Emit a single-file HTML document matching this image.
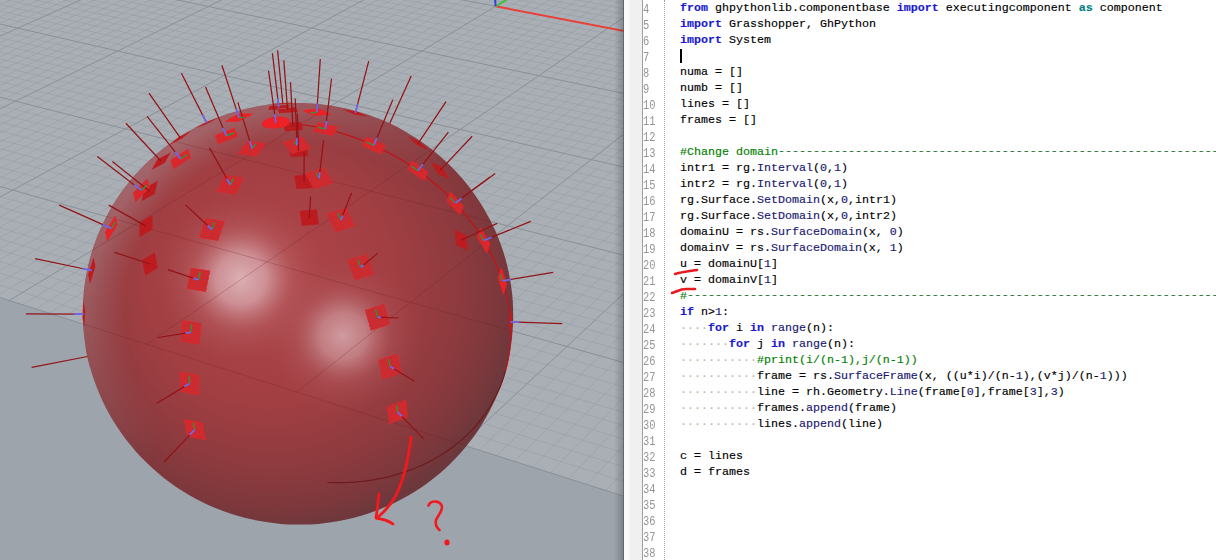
<!DOCTYPE html>
<html><head><meta charset="utf-8"><style>
html,body{margin:0;padding:0;width:1216px;height:560px;overflow:hidden;background:#fff}
#vp{position:absolute;left:0;top:0;width:624px;height:560px;overflow:hidden}
#strip{position:absolute;left:624px;top:0;width:18px;height:560px;background:linear-gradient(90deg,#fafafa 0,#fafafa 5px,#f0f0f0 6px)}
#gl{position:absolute;left:642px;top:0;width:1px;height:560px;background:#a0a0a0}
#ed{position:absolute;left:643px;top:0;width:573px;height:560px;background:#fff;overflow:hidden}
#sep{position:absolute;left:664px;top:0;width:0;height:560px;border-left:1px dotted #a0a0a0}
.l,.n{position:absolute;font-family:"Liberation Mono",monospace;font-size:11.67px;line-height:16px;white-space:pre;height:16px}
.l{left:680px;color:#000;-webkit-text-stroke:0.15px currentColor}
.n{left:643px;color:#959595;font-size:12.4px;transform:scaleX(0.84);transform-origin:0 0}
.d{color:#c0b8a8}
#cur{position:absolute;left:680px;top:49px;width:2px;height:14px;background:#000}
</style></head><body>
<div id="vp"><svg width="624" height="560" viewBox="0 0 624 560" style="position:absolute;left:0;top:0"><defs><clipPath id="sc"><path d="M511.3 287.3 L512.2 294.4 L512.8 301.6 L513.1 308.7 L513.2 315.9 L513.1 323.1 L512.6 330.3 L512 337.4 L511.1 344.5 L510 351.6 L508.6 358.6 L506.9 365.6 L505.1 372.6 L502.9 379.4 L500.6 386.2 L498 392.9 L495.2 399.5 L492.1 406 L488.8 412.4 L485.3 418.7 L481.6 424.9 L477.7 431 L473.5 436.9 L469.2 442.6 L464.6 448.3 L459.9 453.7 L454.9 459.1 L449.8 464.2 L444.5 469.2 L439 474 L433.4 478.6 L427.6 483 L421.6 487.2 L415.5 491.2 L409.2 495 L402.8 498.6 L396.3 502 L389.6 505.2 L382.9 508.1 L376 510.8 L369 513.3 L362 515.5 L354.9 517.5 L347.6 519.3 L340.4 520.8 L333 522.1 L325.7 523.1 L318.2 523.9 L310.8 524.4 L303.3 524.6 L295.8 524.6 L288.3 524.4 L280.9 523.9 L273.4 523.1 L265.9 522.1 L258.5 520.8 L251.2 519.3 L243.8 517.5 L236.6 515.5 L229.4 513.2 L222.3 510.7 L215.2 507.9 L208.3 504.9 L201.5 501.7 L194.8 498.2 L188.2 494.5 L181.7 490.5 L175.4 486.4 L169.2 482 L163.2 477.4 L157.4 472.6 L151.7 467.5 L146.2 462.3 L140.9 456.9 L135.8 451.4 L130.9 445.6 L126.1 439.7 L121.6 433.6 L117.4 427.3 L113.3 420.9 L109.5 414.4 L105.9 407.7 L102.6 400.9 L99.5 394 L96.7 387 L94.1 379.9 L91.7 372.7 L89.7 365.5 L87.9 358.1 L86.3 350.7 L85.1 343.3 L84.1 335.8 L83.4 328.3 L82.9 320.8 L82.8 313.2 L82.9 305.7 L83.3 298.1 L83.9 290.6 L84.9 283.1 L86.1 275.7 L87.6 268.3 L89.3 260.9 L91.3 253.7 L93.6 246.5 L96.1 239.4 L98.9 232.4 L102 225.5 L105.3 218.7 L108.8 212 L112.6 205.5 L116.7 199.1 L120.9 192.8 L125.4 186.7 L130.1 180.8 L135 175.1 L140.1 169.5 L145.4 164.1 L150.9 158.9 L156.6 153.9 L162.5 149.1 L168.5 144.5 L174.7 140.2 L181 136 L187.5 132.1 L194.1 128.4 L200.9 125 L207.7 121.8 L214.7 118.8 L221.8 116.1 L228.9 113.6 L236.2 111.4 L243.5 109.4 L250.9 107.7 L258.3 106.3 L265.7 105.1 L273.2 104.1 L280.8 103.5 L288.3 103.1 L295.8 102.9 L303.4 103 L310.9 103.4 L318.4 104 L325.9 104.9 L333.3 106 L340.7 107.4 L348 109 L355.3 110.9 L362.5 113 L369.6 115.3 L376.6 117.9 L383.5 120.8 L390.3 123.8 L397 127.1 L403.5 130.6 L409.9 134.4 L416.2 138.3 L422.4 142.4 L428.3 146.8 L434.2 151.3 L439.8 156.1 L445.3 161 L450.6 166.1 L455.8 171.3 L460.7 176.7 L465.4 182.3 L470 188.1 L474.3 193.9 L478.4 200 L482.3 206.1 L486 212.4 L489.5 218.8 L492.7 225.3 L495.8 231.8 L498.5 238.5 L501.1 245.3 L503.4 252.1 L505.5 259.1 L507.3 266 L508.9 273.1 L510.2 280.1Z"/></clipPath><radialGradient id="sb" gradientUnits="userSpaceOnUse" cx="275" cy="285" r="245" fx="265" fy="275">
<stop offset="0" stop-color="rgb(176,70,74)"/><stop offset="0.5" stop-color="rgb(162,63,67)"/><stop offset="0.78" stop-color="rgb(140,58,62)"/><stop offset="0.92" stop-color="rgb(124,56,60)"/><stop offset="1" stop-color="rgb(108,56,60)"/></radialGradient><radialGradient id="h1" gradientUnits="userSpaceOnUse" cx="241" cy="279" r="85">
<stop offset="0" stop-color="rgb(222,182,186)" stop-opacity="0.95"/><stop offset="0.3" stop-color="rgb(212,160,165)" stop-opacity="0.82"/><stop offset="0.62" stop-color="rgb(190,112,117)" stop-opacity="0.3"/><stop offset="1" stop-color="rgb(170,80,85)" stop-opacity="0"/></radialGradient><radialGradient id="h2" gradientUnits="userSpaceOnUse" cx="343" cy="336" r="78">
<stop offset="0" stop-color="rgb(212,165,170)" stop-opacity="0.9"/><stop offset="0.3" stop-color="rgb(204,148,152)" stop-opacity="0.72"/><stop offset="0.62" stop-color="rgb(182,104,109)" stop-opacity="0.26"/><stop offset="1" stop-color="rgb(170,80,85)" stop-opacity="0"/></radialGradient><radialGradient id="rimg" cx="0.5" cy="0.5" r="0.5"><stop offset="0.8" stop-color="#000"/><stop offset="0.97" stop-color="#fff"/><stop offset="1" stop-color="#fff"/></radialGradient><mask id="rim"><path d="M511.3 287.3 L512.2 294.4 L512.8 301.6 L513.1 308.7 L513.2 315.9 L513.1 323.1 L512.6 330.3 L512 337.4 L511.1 344.5 L510 351.6 L508.6 358.6 L506.9 365.6 L505.1 372.6 L502.9 379.4 L500.6 386.2 L498 392.9 L495.2 399.5 L492.1 406 L488.8 412.4 L485.3 418.7 L481.6 424.9 L477.7 431 L473.5 436.9 L469.2 442.6 L464.6 448.3 L459.9 453.7 L454.9 459.1 L449.8 464.2 L444.5 469.2 L439 474 L433.4 478.6 L427.6 483 L421.6 487.2 L415.5 491.2 L409.2 495 L402.8 498.6 L396.3 502 L389.6 505.2 L382.9 508.1 L376 510.8 L369 513.3 L362 515.5 L354.9 517.5 L347.6 519.3 L340.4 520.8 L333 522.1 L325.7 523.1 L318.2 523.9 L310.8 524.4 L303.3 524.6 L295.8 524.6 L288.3 524.4 L280.9 523.9 L273.4 523.1 L265.9 522.1 L258.5 520.8 L251.2 519.3 L243.8 517.5 L236.6 515.5 L229.4 513.2 L222.3 510.7 L215.2 507.9 L208.3 504.9 L201.5 501.7 L194.8 498.2 L188.2 494.5 L181.7 490.5 L175.4 486.4 L169.2 482 L163.2 477.4 L157.4 472.6 L151.7 467.5 L146.2 462.3 L140.9 456.9 L135.8 451.4 L130.9 445.6 L126.1 439.7 L121.6 433.6 L117.4 427.3 L113.3 420.9 L109.5 414.4 L105.9 407.7 L102.6 400.9 L99.5 394 L96.7 387 L94.1 379.9 L91.7 372.7 L89.7 365.5 L87.9 358.1 L86.3 350.7 L85.1 343.3 L84.1 335.8 L83.4 328.3 L82.9 320.8 L82.8 313.2 L82.9 305.7 L83.3 298.1 L83.9 290.6 L84.9 283.1 L86.1 275.7 L87.6 268.3 L89.3 260.9 L91.3 253.7 L93.6 246.5 L96.1 239.4 L98.9 232.4 L102 225.5 L105.3 218.7 L108.8 212 L112.6 205.5 L116.7 199.1 L120.9 192.8 L125.4 186.7 L130.1 180.8 L135 175.1 L140.1 169.5 L145.4 164.1 L150.9 158.9 L156.6 153.9 L162.5 149.1 L168.5 144.5 L174.7 140.2 L181 136 L187.5 132.1 L194.1 128.4 L200.9 125 L207.7 121.8 L214.7 118.8 L221.8 116.1 L228.9 113.6 L236.2 111.4 L243.5 109.4 L250.9 107.7 L258.3 106.3 L265.7 105.1 L273.2 104.1 L280.8 103.5 L288.3 103.1 L295.8 102.9 L303.4 103 L310.9 103.4 L318.4 104 L325.9 104.9 L333.3 106 L340.7 107.4 L348 109 L355.3 110.9 L362.5 113 L369.6 115.3 L376.6 117.9 L383.5 120.8 L390.3 123.8 L397 127.1 L403.5 130.6 L409.9 134.4 L416.2 138.3 L422.4 142.4 L428.3 146.8 L434.2 151.3 L439.8 156.1 L445.3 161 L450.6 166.1 L455.8 171.3 L460.7 176.7 L465.4 182.3 L470 188.1 L474.3 193.9 L478.4 200 L482.3 206.1 L486 212.4 L489.5 218.8 L492.7 225.3 L495.8 231.8 L498.5 238.5 L501.1 245.3 L503.4 252.1 L505.5 259.1 L507.3 266 L508.9 273.1 L510.2 280.1Z" fill="url(#rimg)"/></mask><linearGradient id="rimc" gradientUnits="userSpaceOnUse" x1="120" y1="130" x2="300" y2="320"><stop offset="0" stop-color="rgb(190,170,176)" stop-opacity="0.45"/><stop offset="1" stop-color="rgb(190,170,176)" stop-opacity="0"/></linearGradient><linearGradient id="shd" x1="0" x2="1"><stop offset="0" stop-color="#000" stop-opacity="0"/><stop offset="1" stop-color="#000" stop-opacity="0.22"/></linearGradient></defs><rect width="624" height="560" fill="#9ea4ab"/><polygon points="-532.4,128 845.4,566.8 1290.2,-87.7 357.9,-214.2" fill="#a9afb5"/><path d="M-523.4 130.8L365.2 -213.3M-517.8 122.4L854.2 553.8M-514.4 133.7L372.6 -212.3M-503.4 116.9L862.9 541.2M-505.3 136.6L380 -211.2M-489.2 111.4L871.3 528.7M-496.2 139.5L387.4 -210.2M-475.2 106L879.6 516.5M-486.9 142.5L394.9 -209.2M-461.4 100.7L887.7 504.5M-477.7 145.4L402.4 -208.2M-447.7 95.5L895.7 492.8M-468.3 148.4L409.9 -207.2M-434.2 90.3L903.6 481.3M-458.9 151.4L417.5 -206.2M-420.9 85.1L911.2 469.9M-449.4 154.4L425.1 -205.1M-407.7 80.1L918.8 458.8M-430.2 160.5L440.4 -203M-381.9 70.1L933.5 437.2M-420.5 163.6L448.1 -202M-369.2 65.3L940.6 426.7M-410.8 166.7L455.8 -201M-356.6 60.4L947.7 416.4M-400.9 169.8L463.6 -199.9M-344.2 55.7L954.6 406.2M-391 173L471.4 -198.8M-332 51L961.3 396.2M-381 176.2L479.3 -197.8M-319.9 46.3L968 386.4M-371 179.4L487.1 -196.7M-307.9 41.7L974.5 376.8M-360.8 182.6L495 -195.6M-296.1 37.2L981 367.3M-350.6 185.9L503 -194.6M-284.4 32.7L987.3 358M-330 192.4L519 -192.4M-261.4 23.8L999.7 339.8M-319.5 195.8L527 -191.3M-250.1 19.5L1005.7 331M-309 199.1L535.1 -190.2M-239 15.2L1011.6 322.2M-298.4 202.5L543.3 -189.1M-227.9 10.9L1017.4 313.7M-287.7 205.9L551.4 -188M-217 6.7L1023.2 305.2M-276.9 209.3L559.6 -186.9M-206.2 2.6L1028.8 296.9M-266.1 212.8L567.8 -185.8M-195.5 -1.5L1034.4 288.7M-255.1 216.3L576.1 -184.6M-184.9 -5.6L1039.9 280.7M-244.1 219.8L584.4 -183.5M-174.5 -9.6L1045.2 272.8M-221.8 226.9L601.2 -181.2M-153.9 -17.5L1055.8 257.3M-210.5 230.5L609.6 -180.1M-143.8 -21.4L1060.9 249.7M-199.1 234.1L618.1 -178.9M-133.8 -25.2L1066 242.2M-187.6 237.8L626.6 -177.8M-123.9 -29L1071 234.9M-176.1 241.5L635.1 -176.6M-114.1 -32.8L1075.9 227.7M-164.4 245.2L643.7 -175.5M-104.4 -36.5L1080.7 220.5M-152.7 248.9L652.3 -174.3M-94.8 -40.2L1085.5 213.5M-140.8 252.7L661 -173.1M-85.3 -43.9L1090.2 206.6M-128.9 256.5L669.7 -171.9M-75.9 -47.5L1094.9 199.7M-104.7 264.2L687.2 -169.6M-57.4 -54.6L1103.9 186.4M-92.4 268.1L696 -168.4M-48.3 -58.1L1108.4 179.8M-80.1 272L704.9 -167.2M-39.3 -61.6L1112.8 173.4M-67.7 276L713.8 -165.9M-30.3 -65L1117.1 167M-55.1 280L722.8 -164.7M-21.5 -68.4L1121.3 160.8M-42.4 284L731.8 -163.5M-12.8 -71.8L1125.5 154.6M-29.7 288.1L740.8 -162.3M-4.1 -75.1L1129.7 148.5M-16.8 292.2L749.9 -161.1M4.5 -78.4L1133.8 142.5M-3.8 296.3L759 -159.8M13 -81.7L1137.8 136.5M22.5 304.7L777.4 -157.3M29.7 -88.1L1145.7 124.9M35.8 308.9L786.6 -156.1M38 -91.3L1149.6 119.2M49.2 313.2L795.9 -154.8M46.2 -94.4L1153.4 113.5M62.8 317.5L805.3 -153.5M54.2 -97.5L1157.2 108M76.4 321.9L814.7 -152.3M62.3 -100.6L1160.9 102.5M90.2 326.3L824.1 -151M70.2 -103.7L1164.6 97.1M104.1 330.7L833.6 -149.7M78.1 -106.7L1168.3 91.7M118.2 335.2L843.1 -148.4M85.9 -109.7L1171.8 86.4M132.3 339.7L852.7 -147.1M93.6 -112.6L1175.4 81.2M161 348.8L872 -144.5M108.8 -118.5L1182.3 71M175.6 353.4L881.7 -143.2M116.3 -121.4L1185.8 66M190.2 358.1L891.5 -141.8M123.7 -124.2L1189.1 61M205.1 362.8L901.3 -140.5M131.1 -127.1L1192.5 56.1M220 367.6L911.1 -139.2M138.4 -129.9L1195.7 51.3M235.1 372.4L921.1 -137.8M145.6 -132.7L1199 46.5M250.3 377.2L931 -136.5M152.8 -135.4L1202.2 41.8M265.7 382.1L941 -135.1M159.9 -138.2L1205.4 37.1M281.2 387.1L951.1 -133.7M167 -140.9L1208.5 32.5M312.6 397.1L971.4 -131M180.9 -146.2L1214.7 23.4M328.6 402.2L981.6 -129.6M187.7 -148.8L1217.7 19M344.7 407.3L991.9 -128.2M194.5 -151.5L1220.7 14.6M360.9 412.5L1002.2 -126.8M201.2 -154L1223.7 10.2M377.3 417.7L1012.5 -125.4M207.9 -156.6L1226.6 5.9M393.9 423L1023 -124M214.5 -159.2L1229.5 1.6M410.6 428.3L1033.4 -122.6M221.1 -161.7L1232.3 -2.6M427.5 433.7L1044 -121.1M227.6 -164.2L1235.2 -6.7M444.5 439.1L1054.6 -119.7M234.1 -166.7L1238 -10.8M479.1 450.1L1075.9 -116.8M246.8 -171.6L1243.5 -18.9M496.7 455.7L1086.7 -115.3M253.1 -174L1246.2 -22.9M514.4 461.4L1097.5 -113.9M259.3 -176.4L1248.8 -26.8M532.3 467.1L1108.3 -112.4M265.5 -178.7L1251.5 -30.7M550.4 472.8L1119.3 -110.9M271.7 -181.1L1254.1 -34.6M568.7 478.7L1130.2 -109.4M277.7 -183.4L1256.7 -38.4M587.2 484.5L1141.3 -107.9M283.8 -185.8L1259.2 -42.2M605.8 490.5L1152.4 -106.4M289.7 -188.1L1261.8 -45.9M624.7 496.5L1163.5 -104.9M295.7 -190.3L1264.3 -49.6M662.9 508.7L1186 -101.9M307.4 -194.8L1269.2 -56.8M682.4 514.9L1197.3 -100.3M313.2 -197.1L1271.6 -60.4M702 521.1L1208.7 -98.8M318.9 -199.3L1274 -64M721.8 527.4L1220.2 -97.2M324.6 -201.5L1276.4 -67.5M741.9 533.8L1231.7 -95.7M330.3 -203.6L1278.8 -70.9M762.2 540.3L1243.3 -94.1M335.9 -205.8L1281.1 -74.3M782.6 546.8L1254.9 -92.5M341.4 -207.9L1283.4 -77.7M803.4 553.4L1266.6 -90.9M347 -210.1L1285.7 -81.1M824.3 560.1L1278.4 -89.3M352.4 -212.2L1288 -84.4" stroke="#949aa2" stroke-width="0.5" fill="none"/><path d="M-532.4 128L357.9 -214.2M-532.4 128L845.4 566.8M-439.9 157.4L432.7 -204.1M-394.7 75.1L926.2 447.9M-340.3 189.1L511 -193.5M-272.8 28.2L993.5 348.8M-233 223.3L592.8 -182.4M-164.2 -13.6L1050.6 264.9M-116.8 260.3L678.4 -170.7M-66.6 -51.1L1099.4 193M9.3 300.5L495.6 6.3M21.4 -84.9L495.6 6.3M146.6 344.2L862.3 -145.8M101.2 -115.6L1178.9 76.1M296.8 392.1L961.2 -132.4M173.9 -143.5L1211.6 27.9M461.7 444.6L1065.2 -118.3M240.5 -169.1L1240.7 -14.9M643.7 502.5L1174.7 -103.4M301.6 -192.6L1266.8 -53.2M845.4 566.8L1290.2 -87.7M357.9 -214.2L1290.2 -87.7" stroke="#899097" stroke-width="1" fill="none"/><path d="M495.6 6.3L1141.8 130.7" stroke="#e8403a" stroke-width="2" fill="none"/><path d="M495.6 6.3L768.2 -158.6" stroke="#40c040" stroke-width="2" fill="none"/><path d="M495.6 6.3L491.5 -56.8" stroke="#3040e0" stroke-width="2" fill="none"/><path d="M511.3 287.3 L512.2 294.4 L512.8 301.6 L513.1 308.7 L513.2 315.9 L513.1 323.1 L512.6 330.3 L512 337.4 L511.1 344.5 L510 351.6 L508.6 358.6 L506.9 365.6 L505.1 372.6 L502.9 379.4 L500.6 386.2 L498 392.9 L495.2 399.5 L492.1 406 L488.8 412.4 L485.3 418.7 L481.6 424.9 L477.7 431 L473.5 436.9 L469.2 442.6 L464.6 448.3 L459.9 453.7 L454.9 459.1 L449.8 464.2 L444.5 469.2 L439 474 L433.4 478.6 L427.6 483 L421.6 487.2 L415.5 491.2 L409.2 495 L402.8 498.6 L396.3 502 L389.6 505.2 L382.9 508.1 L376 510.8 L369 513.3 L362 515.5 L354.9 517.5 L347.6 519.3 L340.4 520.8 L333 522.1 L325.7 523.1 L318.2 523.9 L310.8 524.4 L303.3 524.6 L295.8 524.6 L288.3 524.4 L280.9 523.9 L273.4 523.1 L265.9 522.1 L258.5 520.8 L251.2 519.3 L243.8 517.5 L236.6 515.5 L229.4 513.2 L222.3 510.7 L215.2 507.9 L208.3 504.9 L201.5 501.7 L194.8 498.2 L188.2 494.5 L181.7 490.5 L175.4 486.4 L169.2 482 L163.2 477.4 L157.4 472.6 L151.7 467.5 L146.2 462.3 L140.9 456.9 L135.8 451.4 L130.9 445.6 L126.1 439.7 L121.6 433.6 L117.4 427.3 L113.3 420.9 L109.5 414.4 L105.9 407.7 L102.6 400.9 L99.5 394 L96.7 387 L94.1 379.9 L91.7 372.7 L89.7 365.5 L87.9 358.1 L86.3 350.7 L85.1 343.3 L84.1 335.8 L83.4 328.3 L82.9 320.8 L82.8 313.2 L82.9 305.7 L83.3 298.1 L83.9 290.6 L84.9 283.1 L86.1 275.7 L87.6 268.3 L89.3 260.9 L91.3 253.7 L93.6 246.5 L96.1 239.4 L98.9 232.4 L102 225.5 L105.3 218.7 L108.8 212 L112.6 205.5 L116.7 199.1 L120.9 192.8 L125.4 186.7 L130.1 180.8 L135 175.1 L140.1 169.5 L145.4 164.1 L150.9 158.9 L156.6 153.9 L162.5 149.1 L168.5 144.5 L174.7 140.2 L181 136 L187.5 132.1 L194.1 128.4 L200.9 125 L207.7 121.8 L214.7 118.8 L221.8 116.1 L228.9 113.6 L236.2 111.4 L243.5 109.4 L250.9 107.7 L258.3 106.3 L265.7 105.1 L273.2 104.1 L280.8 103.5 L288.3 103.1 L295.8 102.9 L303.4 103 L310.9 103.4 L318.4 104 L325.9 104.9 L333.3 106 L340.7 107.4 L348 109 L355.3 110.9 L362.5 113 L369.6 115.3 L376.6 117.9 L383.5 120.8 L390.3 123.8 L397 127.1 L403.5 130.6 L409.9 134.4 L416.2 138.3 L422.4 142.4 L428.3 146.8 L434.2 151.3 L439.8 156.1 L445.3 161 L450.6 166.1 L455.8 171.3 L460.7 176.7 L465.4 182.3 L470 188.1 L474.3 193.9 L478.4 200 L482.3 206.1 L486 212.4 L489.5 218.8 L492.7 225.3 L495.8 231.8 L498.5 238.5 L501.1 245.3 L503.4 252.1 L505.5 259.1 L507.3 266 L508.9 273.1 L510.2 280.1Z" fill="url(#sb)"/><g clip-path="url(#sc)"><rect x="80" y="100" width="440" height="430" fill="url(#h1)"/><rect x="80" y="100" width="440" height="430" fill="url(#h2)"/><rect x="80" y="100" width="440" height="430" fill="url(#rimc)" mask="url(#rim)"/><path d="M-532.4 128L357.9 -214.2M-532.4 128L845.4 566.8M-439.9 157.4L432.7 -204.1M-394.7 75.1L926.2 447.9M-340.3 189.1L511 -193.5M-272.8 28.2L993.5 348.8M-233 223.3L592.8 -182.4M-164.2 -13.6L1050.6 264.9M-116.8 260.3L678.4 -170.7M-66.6 -51.1L1099.4 193M9.3 300.5L495.6 6.3M21.4 -84.9L495.6 6.3M146.6 344.2L862.3 -145.8M101.2 -115.6L1178.9 76.1M296.8 392.1L961.2 -132.4M173.9 -143.5L1211.6 27.9M461.7 444.6L1065.2 -118.3M240.5 -169.1L1240.7 -14.9M643.7 502.5L1174.7 -103.4M301.6 -192.6L1266.8 -53.2M845.4 566.8L1290.2 -87.7M357.9 -214.2L1290.2 -87.7" stroke="#6a2024" stroke-opacity="0.25" stroke-width="1" fill="none"/></g><path d="M327.4 482.5 L334.1 482.7 L340.8 482.7 L347.4 482.5 L354 482.1 L360.5 481.5 L367 480.8 L373.4 479.8 L379.8 478.6 L386.1 477.3 L392.3 475.8 L398.4 474 L404.4 472.1 L410.3 470 L416.1 467.8 L421.8 465.3 L427.3 462.7 L432.8 459.8 L438.1 456.8 L443.2 453.7 L448.3 450.3 L453.1 446.8 L457.8 443.1 L462.4 439.3 L466.7 435.2 L470.9 431.1 L474.9 426.8 L478.8 422.3 L482.4 417.7 L485.8 412.9 L489.1 408 L492.1 403 L494.9 397.8 L497.5 392.6 L499.9 387.2 L502.1 381.7 L504 376.1 L505.7 370.3" stroke="#6e1a1e" stroke-width="1.2" fill="none"/><path d="M505.7 370.3 L507.1 364.5 L508.3 358.7 L509.3 352.7 L510 346.6 L510.5 340.5 L510.7 334.3 L510.7 328.1 L510.4 321.8 L509.9 315.5 L509.1 309.2 L508 302.8 L506.7 296.4 L505.1 290 L503.3 283.6 L501.2 277.3 L498.8 270.9 L496.2 264.6 L493.4 258.3 L490.2 252 L486.9 245.8 L483.3 239.7 L479.4 233.6 L475.3 227.6 L471 221.7 L466.4 215.9 L461.7 210.2 L456.7 204.6 L451.4 199.1 L446 193.8 L440.4 188.6 L434.6 183.5 L428.6 178.6 L422.4 173.9 L416 169.3 L409.5 164.9 L402.8 160.7 L396 156.7 L389.1 152.9 L382 149.3 L374.8 145.9 L367.5 142.7 L360.1 139.7 L352.7 136.9 L345.1 134.4 L337.5 132.1 L329.9 130.1 L322.2 128.3 L314.5 126.7 L306.7 125.4 L299 124.3 L291.3 123.5 L283.6 122.9 L275.9 122.6" stroke="#c01418" stroke-width="1.3" fill="none"/><path d="M509.5 334.7 L512.4 325 L511.3 309 L508.4 318.7ZM467.6 250.6 L456.2 245 L455 229.8 L466.4 235.4ZM462.3 213 L450.7 207.5 L446.5 193.6 L458.1 199ZM449.4 179 L437.7 173.7 L430.5 161.7 L442.2 167ZM429.1 150.6 L417.3 145.3 L407.3 135.9 L419.1 141.2ZM401.9 129.3 L390 124 L377.4 117.9 L389.3 123.2ZM368.6 116.7 L356.7 111.4 L342.1 109 L354.1 114.4ZM318.9 224.5 L301.8 225.8 L299.8 210.8 L316.9 209.6ZM313.7 187.9 L296.5 189.1 L294.2 175.8 L311.6 174.6ZM308.4 155.9 L290.8 157.1 L288.5 146.1 L306.3 144.8ZM303 130.1 L285 131.3 L282.7 123.1 L301 121.9ZM297.9 112 L279.3 113.2 L277.2 108.6 L296 107.3ZM293.2 103.2 L274.1 104.5 L272.3 103.8 L291.5 102.5ZM289.3 104.8 L269.7 106.2 L268.2 109.9 L288 108.6ZM157.8 267.9 L145.2 275.5 L142.1 260.1 L154.9 252.5ZM152.5 229.6 L139.6 237 L139.4 222.5 L152.4 215.1ZM154.7 194 L141.6 201.3 L144.5 188.3 L157.7 181.1ZM164.7 163 L151.4 170.1 L157.4 159.5 L170.8 152.3ZM182.4 138.2 L169 145.3 L178.1 137.6 L191.5 130.5ZM207.4 121.4 L194 128.6 L205.7 124.5 L219.2 117.3ZM88.5 359.8 L90.3 369.4 L86.6 353.1 L84.8 343.6ZM82.5 317.9 L84.3 327.4 L85.2 310.1 L83.3 300.8ZM88.1 274.5 L90 283.7 L95.5 266.5 L93.6 257.4Z" fill="#bc1c20"/><path d="M187.4 436.3 L205.5 439.7 L202.3 422.8 L184.1 419.4ZM180.9 391.5 L199.2 394.8 L198.5 375.3 L180 372ZM180.7 341.1 L199.2 344.3 L201 323.5 L182.4 320.4ZM187 288.6 L205.6 291.6 L209.8 271 L191.2 268ZM199.4 237.6 L218 240.4 L224.4 221.4 L205.8 218.6ZM217 191.6 L235.4 194.2 L243.5 178 L225.1 175.4ZM238.4 153.5 L256.6 156 L265.7 143.6 L247.6 141.1ZM262.1 125.4 L280 127.8 L289.5 119.7 L271.8 117.4ZM389.3 423.6 L407.5 417 L405.7 400.2 L387.3 406.7ZM382.7 379.2 L401.3 372.8 L397.4 353.9 L378.7 360.2ZM371.1 330.3 L390 324.1 L384.2 304.2 L365.3 310.3ZM355.1 279.9 L374 274 L366.7 254.5 L347.7 260.4ZM335.6 231.6 L354.6 225.9 L346.2 208.2 L327.2 213.8ZM314 188.6 L333 183.2 L324.2 168.4 L305.2 173.6ZM291.8 153.5 L310.7 148.4 L302 137.4 L283.2 142.4ZM270.5 128.5 L289.2 123.6 L281.2 116.8 L262.6 121.6ZM503.6 293.8 L506.5 284.2 L501.3 268 L498.2 277.5ZM486.9 253 L490.1 243.7 L480.7 228.1 L477.4 237.4ZM460 214.5 L463.5 205.5 L450.4 191.5 L446.8 200.5ZM424 180.8 L427.9 172 L411.7 160.5 L407.7 169.2ZM380.9 153.9 L385.2 145.2 L366.8 137 L362.3 145.5ZM332.9 135.6 L337.7 127.1 L318.2 122.5 L313.2 131ZM283 127.1 L288.3 118.7 L268.8 118.2 L263.4 126.5ZM330.7 114.1 L318.7 108.7 L302.9 110.5 L314.8 116ZM290 122.3 L278.1 116.7 L261.7 122.9 L273.6 128.6ZM286.4 117.8 L266.3 119.1 L265.3 127.4 L285.6 126.1ZM238.8 114 L225.3 121.2 L239.2 121.1 L252.6 113.9ZM274.9 116.9 L261.6 124.2 L276.9 128.3 L290.1 121ZM105.3 232 L107.4 240.9 L117.3 224.8 L115.2 216.1ZM133.4 193.1 L135.7 201.7 L149.7 187.7 L147.2 179.2ZM170.8 160.2 L173.5 168.5 L190.6 157.5 L187.8 149.4ZM215.3 135.5 L218.5 143.5 L237.6 136.2 L234.3 128.2ZM264.1 120.3 L267.7 128.1 L287.7 124.9 L284 117.1Z" fill="#a8363a"/><path d="M187.4 436.3L184.1 419.4M187.4 436.3L205.5 439.7M189.2 436.6L185.9 419.7M187 434.6L205.2 438M191 436.9L187.7 420.1M186.7 432.9L204.9 436.3M192.8 437.3L189.5 420.4M186.4 431.2L204.5 434.6M194.6 437.6L191.3 420.7M186.1 429.5L204.2 433M196.4 438L193.2 421.1M185.7 427.8L203.9 431.3M198.2 438.3L195 421.4M185.4 426.2L203.6 429.6M200 438.7L196.8 421.8M185.1 424.5L203.3 427.9M201.9 439L198.7 422.1M184.7 422.8L203 426.2M203.7 439.4L200.5 422.4M184.4 421.1L202.6 424.5M205.5 439.7L202.3 422.8M184.1 419.4L202.3 422.8M180.9 391.5L180 372M180.9 391.5L199.2 394.8M182.7 391.8L181.8 372.3M180.8 389.5L199.2 392.9M184.5 392.1L183.7 372.7M180.7 387.6L199.1 390.9M186.4 392.5L185.5 373M180.6 385.6L199 389M188.2 392.8L187.4 373.3M180.5 383.7L198.9 387M190 393.1L189.2 373.7M180.4 381.8L198.9 385.1M191.9 393.5L191.1 374M180.3 379.8L198.8 383.1M193.7 393.8L192.9 374.3M180.3 377.9L198.7 381.2M195.6 394.1L194.8 374.6M180.2 375.9L198.6 379.2M197.4 394.5L196.6 375M180.1 374L198.5 377.3M199.2 394.8L198.5 375.3M180 372L198.5 375.3M180.7 341.1L182.4 320.4M180.7 341.1L199.2 344.3M182.5 341.4L184.2 320.7M180.8 339L199.4 342.2M184.4 341.7L186.1 321M181 337L199.6 340.2M186.2 342.1L188 321.3M181.2 334.9L199.8 338.1M188.1 342.4L189.8 321.6M181.4 332.8L199.9 336M189.9 342.7L191.7 321.9M181.5 330.7L200.1 333.9M191.8 343L193.5 322.3M181.7 328.7L200.3 331.9M193.6 343.4L195.4 322.6M181.9 326.6L200.5 329.8M195.5 343.7L197.3 322.9M182 324.5L200.6 327.7M197.4 344L199.1 323.2M182.2 322.5L200.8 325.6M199.2 344.3L201 323.5M182.4 320.4L201 323.5M187 288.6L191.2 268M187 288.6L205.6 291.6M188.8 288.9L193.1 268.3M187.4 286.5L206 289.6M190.7 289.2L194.9 268.6M187.8 284.5L206.4 287.5M192.6 289.5L196.8 268.9M188.3 282.4L206.9 285.4M194.4 289.8L198.6 269.2M188.7 280.4L207.3 283.4M196.3 290.1L200.5 269.5M189.1 278.3L207.7 281.3M198.1 290.4L202.4 269.8M189.5 276.2L208.1 279.2M200 290.7L204.2 270.1M189.9 274.2L208.6 277.2M201.9 291L206.1 270.4M190.4 272.1L209 275.1M203.7 291.3L208 270.7M190.8 270.1L209.4 273.1M205.6 291.6L209.8 271M191.2 268L209.8 271M199.4 237.6L205.8 218.6M199.4 237.6L218 240.4M201.3 237.9L207.7 218.9M200.1 235.7L218.6 238.5M203.1 238.1L209.5 219.1M200.7 233.8L219.3 236.6M205 238.4L211.4 219.4M201.3 231.9L219.9 234.7M206.8 238.7L213.2 219.7M202 230L220.5 232.8M208.7 239L215.1 220M202.6 228.1L221.2 230.9M210.5 239.3L216.9 220.3M203.3 226.2L221.8 229M212.4 239.6L218.8 220.5M203.9 224.3L222.5 227.1M214.3 239.9L220.6 220.8M204.5 222.4L223.1 225.2M216.1 240.2L222.5 221.1M205.2 220.5L223.7 223.3M218 240.4L224.4 221.4M205.8 218.6L224.4 221.4M217 191.6L225.1 175.4M217 191.6L235.4 194.2M218.8 191.8L226.9 175.7M217.8 189.9L236.3 192.6M220.7 192.1L228.8 175.9M218.6 188.3L237.1 191M222.5 192.4L230.6 176.2M219.5 186.7L237.9 189.4M224.4 192.6L232.4 176.4M220.3 185.1L238.7 187.7M226.2 192.9L234.3 176.7M221.1 183.5L239.5 186.1M228.1 193.2L236.1 177M221.9 181.8L240.3 184.5M229.9 193.4L238 177.2M222.7 180.2L241.1 182.9M231.8 193.7L239.8 177.5M223.5 178.6L241.9 181.3M233.6 194L241.6 177.8M224.3 177L242.7 179.6M235.4 194.2L243.5 178M225.1 175.4L243.5 178M238.4 153.5L247.6 141.1M238.4 153.5L256.6 156M240.3 153.7L249.4 141.3M239.4 152.2L257.6 154.8M242.1 154L251.2 141.6M240.3 151L258.5 153.5M243.9 154.2L253.1 141.8M241.2 149.8L259.4 152.3M245.7 154.5L254.9 142.1M242.1 148.5L260.3 151M247.5 154.7L256.7 142.3M243.1 147.3L261.2 149.8M249.3 155L258.5 142.6M244 146L262.1 148.5M251.2 155.3L260.3 142.8M244.9 144.8L263 147.3M253 155.5L262.1 143.1M245.8 143.6L263.9 146M254.8 155.8L263.9 143.3M246.7 142.3L264.8 144.8M256.6 156L265.7 143.6M247.6 141.1L265.7 143.6M262.1 125.4L271.8 117.4M262.1 125.4L280 127.8M263.9 125.7L273.6 117.6M263.1 124.6L281 127M265.7 125.9L275.3 117.9M264.1 123.8L281.9 126.2M267.5 126.2L277.1 118.1M265 123L282.9 125.4M269.3 126.4L278.9 118.3M266 122.2L283.9 124.6M271.1 126.6L280.6 118.6M267 121.4L284.8 123.8M272.9 126.9L282.4 118.8M267.9 120.6L285.8 123M274.6 127.1L284.2 119M268.9 119.8L286.7 122.2M276.4 127.4L286 119.3M269.9 119L287.7 121.3M278.2 127.6L287.8 119.5M270.8 118.2L288.6 120.5M280 127.8L289.5 119.7M271.8 117.4L289.5 119.7M389.3 423.6L387.3 406.7M389.3 423.6L407.5 417M391.1 422.9L389.2 406.1M389.1 421.9L407.3 415.3M392.9 422.2L391 405.4M388.9 420.2L407.2 413.6M394.8 421.6L392.9 404.8M388.7 418.5L407 412M396.6 420.9L394.7 404.1M388.5 416.9L406.8 410.3M398.4 420.3L396.5 403.5M388.3 415.2L406.6 408.6M400.2 419.6L398.4 402.8M388.1 413.5L406.4 406.9M402.1 418.9L400.2 402.2M387.9 411.8L406.3 405.3M403.9 418.3L402.1 401.5M387.7 410.1L406.1 403.6M405.7 417.6L403.9 400.9M387.5 408.4L405.9 401.9M407.5 417L405.7 400.2M387.3 406.7L405.7 400.2M382.7 379.2L378.7 360.2M382.7 379.2L401.3 372.8M384.6 378.6L380.6 359.6M382.3 377.3L400.9 370.9M386.5 377.9L382.5 358.9M381.9 375.4L400.6 369M388.3 377.3L384.4 358.3M381.5 373.5L400.2 367.1M390.2 376.6L386.2 357.7M381.1 371.6L399.8 365.2M392.1 376L388.1 357M380.7 369.7L399.4 363.3M393.9 375.3L390 356.4M380.3 367.8L399 361.5M395.8 374.7L391.8 355.8M379.9 365.9L398.6 359.6M397.6 374.1L393.7 355.1M379.5 364L398.2 357.7M399.5 373.4L395.6 354.5M379.1 362.1L397.8 355.8M401.3 372.8L397.4 353.9M378.7 360.2L397.4 353.9M371.1 330.3L365.3 310.3M371.1 330.3L390 324.1M373 329.6L367.2 309.7M370.5 328.3L389.4 322.1M374.9 329L369 309.1M370 326.3L388.8 320.1M376.8 328.4L370.9 308.5M369.4 324.3L388.2 318.1M378.7 327.8L372.8 307.9M368.8 322.3L387.6 316.1M380.6 327.2L374.7 307.3M368.2 320.3L387.1 314.1M382.5 326.5L376.6 306.6M367.6 318.3L386.5 312.2M384.3 325.9L378.5 306M367 316.3L385.9 310.2M386.2 325.3L380.4 305.4M366.4 314.3L385.3 308.2M388.1 324.7L382.3 304.8M365.8 312.3L384.7 306.2M390 324.1L384.2 304.2M365.3 310.3L384.2 304.2M355.1 279.9L347.7 260.4M355.1 279.9L374 274M357 279.3L349.6 259.8M354.3 278L373.3 272M358.9 278.7L351.5 259.2M353.6 276L372.6 270.1M360.8 278.1L353.4 258.6M352.8 274.1L371.8 268.1M362.7 277.5L355.3 258M352.1 272.1L371.1 266.2M364.6 276.9L357.2 257.4M351.4 270.1L370.4 264.3M366.5 276.3L359.1 256.9M350.6 268.2L369.6 262.3M368.4 275.8L361 256.3M349.9 266.2L368.9 260.4M370.3 275.2L362.9 255.7M349.1 264.3L368.2 258.4M372.2 274.6L364.8 255.1M348.4 262.3L367.4 256.5M374 274L366.7 254.5M347.7 260.4L366.7 254.5M335.6 231.6L327.2 213.8M335.6 231.6L354.6 225.9M337.5 231L329.1 213.2M334.7 229.8L353.8 224.2M339.4 230.5L331 212.7M333.9 228L352.9 222.4M341.3 229.9L332.9 212.1M333 226.2L352.1 220.6M343.2 229.3L334.8 211.5M332.2 224.5L351.3 218.8M345.1 228.8L336.7 211M331.4 222.7L350.4 217.1M347 228.2L338.6 210.4M330.5 220.9L349.6 215.3M348.9 227.6L340.5 209.9M329.7 219.1L348.7 213.5M350.8 227.1L342.4 209.3M328.9 217.3L347.9 211.8M352.7 226.5L344.3 208.8M328 215.5L347.1 210M354.6 225.9L346.2 208.2M327.2 213.8L346.2 208.2M314 188.6L305.2 173.6M314 188.6L333 183.2M315.9 188L307.1 173.1M313.1 187.1L332.1 181.7M317.8 187.5L309 172.6M312.2 185.6L331.2 180.2M319.7 186.9L310.9 172M311.3 184.1L330.3 178.7M321.6 186.4L312.8 171.5M310.5 182.6L329.5 177.2M323.5 185.9L314.7 171M309.6 181.1L328.6 175.8M325.4 185.3L316.6 170.5M308.7 179.6L327.7 174.3M327.3 184.8L318.5 169.9M307.8 178.1L326.8 172.8M329.2 184.3L320.4 169.4M306.9 176.6L325.9 171.3M331.1 183.7L322.3 168.9M306.1 175.1L325.1 169.8M333 183.2L324.2 168.4M305.2 173.6L324.2 168.4M291.8 153.5L283.2 142.4M291.8 153.5L310.7 148.4M293.7 153L285.1 141.9M291 152.4L309.8 147.3M295.6 152.5L287 141.4M290.1 151.3L309 146.2M297.5 152L288.9 140.9M289.2 150.2L308.1 145.1M299.4 151.5L290.8 140.4M288.4 149.1L307.2 144M301.3 151L292.6 139.8M287.5 147.9L306.4 142.9M303.2 150.5L294.5 139.3M286.6 146.8L305.5 141.8M305.1 150L296.4 138.8M285.8 145.7L304.6 140.7M306.9 149.5L298.3 138.3M284.9 144.6L303.7 139.6M308.8 149L300.1 137.9M284.1 143.5L302.9 138.5M310.7 148.4L302 137.4M283.2 142.4L302 137.4M270.5 128.5L262.6 121.6M270.5 128.5L289.2 123.6M272.4 128L264.5 121.1M269.7 127.8L288.4 122.9M274.3 127.5L266.3 120.6M268.9 127.1L287.6 122.2M276.1 127L268.2 120.1M268.1 126.4L286.8 121.5M278 126.5L270.1 119.6M267.3 125.7L286 120.9M279.9 126L271.9 119.2M266.6 125L285.2 120.2M281.7 125.6L273.8 118.7M265.8 124.3L284.4 119.5M283.6 125.1L275.6 118.2M265 123.6L283.6 118.8M285.5 124.6L277.5 117.7M264.2 122.9L282.8 118.1M287.3 124.1L279.3 117.2M263.4 122.3L282 117.4M289.2 123.6L281.2 116.8M262.6 121.6L281.2 116.8M503.6 293.8L498.2 277.5M503.6 293.8L506.5 284.2M503.9 292.8L498.5 276.6M503 292.2L506 282.6M504.2 291.9L498.8 275.6M502.5 290.6L505.5 281M504.5 290.9L499.2 274.7M502 288.9L505 279.4M504.8 290L499.5 273.7M501.4 287.3L504.4 277.8M505 289L499.8 272.8M500.9 285.7L503.9 276.2M505.3 288.1L500.1 271.8M500.4 284.1L503.4 274.5M505.6 287.1L500.4 270.9M499.8 282.4L502.9 272.9M505.9 286.1L500.7 269.9M499.3 280.8L502.3 271.3M506.2 285.2L501 269M498.8 279.2L501.8 269.7M506.5 284.2L501.3 268M498.2 277.5L501.3 268M486.9 253L477.4 237.4M486.9 253L490.1 243.7M487.2 252L477.8 236.4M486 251.4L489.1 242.1M487.5 251.1L478.1 235.5M485 249.9L488.2 240.6M487.9 250.2L478.4 234.6M484.1 248.3L487.3 239M488.2 249.2L478.8 233.6M483.1 246.8L486.3 237.5M488.5 248.3L479.1 232.7M482.2 245.2L485.4 235.9M488.8 247.4L479.4 231.8M481.2 243.6L484.5 234.4M489.1 246.4L479.7 230.9M480.3 242.1L483.5 232.8M489.4 245.5L480.1 230M479.3 240.5L482.6 231.3M489.8 244.6L480.4 229.1M478.4 238.9L481.7 229.7M490.1 243.7L480.7 228.1M477.4 237.4L480.7 228.1M460 214.5L446.8 200.5M460 214.5L463.5 205.5M460.4 213.6L447.1 199.6M458.7 213.1L462.2 204.1M460.7 212.7L447.5 198.7M457.4 211.7L460.9 202.7M461.1 211.8L447.9 197.8M456.1 210.3L459.6 201.3M461.4 210.9L448.2 196.9M454.7 208.9L458.3 199.9M461.8 210L448.6 196M453.4 207.5L457 198.5M462.1 209.1L449 195.1M452.1 206.1L455.6 197.1M462.5 208.2L449.3 194.2M450.8 204.7L454.3 195.7M462.8 207.3L449.7 193.3M449.4 203.3L453 194.3M463.1 206.4L450 192.4M448.1 201.9L451.7 192.9M463.5 205.5L450.4 191.5M446.8 200.5L450.4 191.5M424 180.8L407.7 169.2M424 180.8L427.9 172M424.4 179.9L408.1 168.3M422.4 179.6L426.3 170.8M424.8 179L408.5 167.5M420.8 178.5L424.7 169.7M425.2 178.1L408.9 166.6M419.2 177.3L423.1 168.5M425.6 177.2L409.3 165.7M417.5 176.2L421.4 167.4M426 176.4L409.7 164.8M415.9 175L419.8 166.2M426.4 175.5L410.1 163.9M414.2 173.9L418.2 165.1M426.8 174.6L410.5 163.1M412.6 172.7L416.6 163.9M427.1 173.7L410.9 162.2M411 171.5L415 162.8M427.5 172.8L411.3 161.3M409.3 170.4L413.3 161.6M427.9 172L411.7 160.5M407.7 169.2L411.7 160.5M380.9 153.9L362.3 145.5M380.9 153.9L385.2 145.2M381.3 153L362.7 144.7M379 153L383.3 144.4M381.7 152.1L363.2 143.8M377.1 152.2L381.5 143.6M382.2 151.3L363.6 142.9M375.3 151.4L379.6 142.8M382.6 150.4L364.1 142.1M373.4 150.5L377.8 141.9M383 149.5L364.5 141.2M371.6 149.7L376 141.1M383.4 148.7L365 140.4M369.7 148.9L374.1 140.3M383.9 147.8L365.4 139.5M367.9 148L372.3 139.4M384.3 147L365.9 138.7M366 147.2L370.5 138.6M384.7 146.1L366.3 137.8M364.1 146.4L368.6 137.8M385.2 145.2L366.8 137M362.3 145.5L366.8 137M332.9 135.6L313.2 131M332.9 135.6L337.7 127.1M333.4 134.7L313.7 130.1M330.9 135.1L335.7 126.6M333.8 133.9L314.2 129.3M328.9 134.6L333.8 126.2M334.3 133L314.7 128.4M327 134.2L331.8 125.7M334.8 132.1L315.2 127.6M325 133.7L329.9 125.3M335.3 131.3L315.7 126.7M323 133.3L327.9 124.8M335.8 130.5L316.2 125.9M321.1 132.8L326 124.4M336.2 129.6L316.7 125M319.1 132.4L324 123.9M336.7 128.8L317.2 124.2M317.1 131.9L322.1 123.4M337.2 127.9L317.7 123.4M315.2 131.4L320.1 123M337.7 127.1L318.2 122.5M313.2 131L318.2 122.5M283 127.1L263.4 126.5M283 127.1L288.3 118.7M283.5 126.2L263.9 125.7M281 127L286.3 118.6M284.1 125.4L264.5 124.9M279.1 127L284.4 118.6M284.6 124.5L265 124M277.1 126.9L282.4 118.5M285.1 123.7L265.6 123.2M275.1 126.9L280.5 118.5M285.6 122.8L266.1 122.3M273.2 126.8L278.6 118.4M286.2 122L266.7 121.5M271.2 126.8L276.6 118.4M286.7 121.2L267.2 120.7M269.3 126.7L274.7 118.3M287.2 120.3L267.8 119.8M267.3 126.6L272.7 118.3M287.7 119.5L268.3 119M265.3 126.6L270.8 118.2M288.3 118.7L268.8 118.2M263.4 126.5L268.8 118.2M330.7 114.1L314.8 116M330.7 114.1L318.7 108.7M329.5 113.5L313.6 115.5M329.1 114.3L317.2 108.8M328.3 113L312.4 114.9M327.5 114.5L315.6 109M327.1 112.4L311.2 114.4M326 114.7L314 109.2M325.9 111.9L310 113.8M324.4 114.8L312.4 109.4M324.7 111.4L308.8 113.3M322.8 115L310.8 109.6M323.5 110.8L307.6 112.7M321.2 115.2L309.2 109.8M322.3 110.3L306.4 112.2M319.6 115.4L307.7 110M321.1 109.7L305.2 111.6M318 115.6L306.1 110.1M319.9 109.2L304.1 111.1M316.4 115.8L304.5 110.3M318.7 108.7L302.9 110.5M314.8 116L302.9 110.5M290 122.3L273.6 128.6M290 122.3L278.1 116.7M288.8 121.7L272.4 128M288.4 122.9L276.5 117.3M287.6 121.2L271.2 127.4M286.8 123.5L274.8 117.9M286.4 120.6L270 126.9M285.1 124.2L273.2 118.5M285.2 120L268.9 126.3M283.5 124.8L271.6 119.2M284 119.5L267.7 125.7M281.9 125.4L269.9 119.8M282.8 118.9L266.5 125.2M280.2 126L268.3 120.4M281.7 118.4L265.3 124.6M278.6 126.7L266.7 121M280.5 117.8L264.1 124M276.9 127.3L265 121.6M279.3 117.2L262.9 123.5M275.3 127.9L263.4 122.3M278.1 116.7L261.7 122.9M273.6 128.6L261.7 122.9M286.4 117.8L285.6 126.1M286.4 117.8L266.3 119.1M284.4 117.9L283.6 126.2M286.3 118.6L266.2 120M282.4 118L281.5 126.3M286.2 119.4L266.1 120.8M280.3 118.2L279.5 126.5M286.1 120.2L266 121.6M278.3 118.3L277.5 126.6M286.1 121.1L265.9 122.4M276.3 118.5L275.4 126.8M286 121.9L265.8 123.3M274.3 118.6L273.4 126.9M285.9 122.7L265.7 124.1M272.3 118.7L271.4 127M285.8 123.6L265.6 124.9M270.3 118.9L269.3 127.2M285.7 124.4L265.5 125.8M268.3 119L267.3 127.3M285.7 125.2L265.4 126.6M266.3 119.1L265.3 127.4M285.6 126.1L265.3 127.4M238.8 114L252.6 113.9M238.8 114L225.3 121.2M237.4 114.7L251.3 114.6M240.1 114L226.7 121.2M236.1 115.5L249.9 115.3M241.5 114L228.1 121.2M234.8 116.2L248.6 116.1M242.9 114L229.5 121.2M233.4 116.9L247.3 116.8M244.3 114L230.9 121.2M232.1 117.6L245.9 117.5M245.7 114L232.2 121.2M230.7 118.3L244.6 118.2M247 114L233.6 121.2M229.4 119L243.2 118.9M248.4 113.9L235 121.1M228 119.8L241.9 119.7M249.8 113.9L236.4 121.1M226.7 120.5L240.5 120.4M251.2 113.9L237.8 121.1M225.3 121.2L239.2 121.1M252.6 113.9L239.2 121.1M274.9 116.9L290.1 121M274.9 116.9L261.6 124.2M273.6 117.6L288.8 121.7M276.4 117.3L263.1 124.6M272.3 118.4L287.5 122.4M277.9 117.7L264.6 125M270.9 119.1L286.2 123.2M279.5 118.1L266.1 125.4M269.6 119.8L284.8 123.9M281 118.5L267.7 125.9M268.3 120.5L283.5 124.6M282.5 118.9L269.2 126.3M266.9 121.3L282.2 125.4M284 119.3L270.7 126.7M265.6 122L280.9 126.1M285.6 119.7L272.3 127.1M264.3 122.7L279.5 126.9M287.1 120.1L273.8 127.5M262.9 123.5L278.2 127.6M288.6 120.6L275.3 127.9M261.6 124.2L276.9 128.3M290.1 121L276.9 128.3M105.3 232L115.2 216.1M105.3 232L107.4 240.9M105.5 232.9L115.4 216.9M106.3 230.4L108.4 239.3M105.7 233.8L115.6 217.8M107.3 228.8L109.4 237.7M105.9 234.7L115.8 218.7M108.3 227.3L110.4 236.1M106.1 235.6L116 219.5M109.3 225.7L111.3 234.5M106.3 236.4L116.3 220.4M110.2 224.1L112.3 232.9M106.5 237.3L116.5 221.3M111.2 222.5L113.3 231.2M106.7 238.2L116.7 222.2M112.2 220.9L114.3 229.6M106.9 239.1L116.9 223M113.2 219.3L115.3 228M107.2 240L117.1 223.9M114.2 217.7L116.3 226.4M107.4 240.9L117.3 224.8M115.2 216.1L117.3 224.8M133.4 193.1L147.2 179.2M133.4 193.1L135.7 201.7M133.6 194L147.5 180.1M134.8 191.7L137.1 200.3M133.9 194.8L147.7 180.9M136.2 190.3L138.5 198.9M134.1 195.7L147.9 181.8M137.5 189L139.9 197.5M134.3 196.5L148.2 182.6M138.9 187.6L141.3 196.1M134.6 197.4L148.4 183.4M140.3 186.2L142.7 194.7M134.8 198.2L148.7 184.3M141.7 184.8L144.1 193.3M135 199.1L148.9 185.1M143.1 183.4L145.5 191.9M135.3 199.9L149.2 186M144.4 182L146.9 190.5M135.5 200.8L149.4 186.8M145.8 180.6L148.3 189.1M135.7 201.7L149.7 187.7M147.2 179.2L149.7 187.7M170.8 160.2L187.8 149.4M170.8 160.2L173.5 168.5M171.1 161L188 150.2M172.5 159.1L175.2 167.4M171.4 161.9L188.3 151M174.2 158L176.9 166.3M171.6 162.7L188.6 151.8M175.9 157L178.6 165.2M171.9 163.5L188.9 152.6M177.6 155.9L180.4 164.1M172.2 164.3L189.2 153.4M179.3 154.8L182.1 163M172.4 165.2L189.5 154.2M181 153.7L183.8 161.9M172.7 166L189.7 155M182.7 152.6L185.5 160.8M173 166.8L190 155.9M184.4 151.5L187.2 159.7M173.3 167.6L190.3 156.7M186.1 150.4L188.9 158.6M173.5 168.5L190.6 157.5M187.8 149.4L190.6 157.5M215.3 135.5L234.3 128.2M215.3 135.5L218.5 143.5M215.7 136.2L234.6 129M217.3 134.7L220.4 142.7M216 137L235 129.8M219.1 134L222.3 142M216.3 137.8L235.3 130.6M221 133.3L224.2 141.3M216.6 138.6L235.6 131.4M222.9 132.6L226.1 140.5M216.9 139.4L235.9 132.2M224.8 131.8L228 139.8M217.2 140.2L236.3 133M226.7 131.1L229.9 139.1M217.5 141L236.6 133.8M228.6 130.4L231.9 138.4M217.8 141.8L236.9 134.6M230.5 129.7L233.8 137.6M218.1 142.7L237.3 135.4M232.4 129L235.7 136.9M218.5 143.5L237.6 136.2M234.3 128.2L237.6 136.2M264.1 120.3L284 117.1M264.1 120.3L267.7 128.1M264.5 121.1L284.3 117.9M266.1 120L269.7 127.8M264.8 121.8L284.7 118.7M268.1 119.7L271.7 127.5M265.2 122.6L285.1 119.4M270.1 119.3L273.7 127.1M265.6 123.4L285.4 120.2M272.1 119L275.7 126.8M265.9 124.2L285.8 121M274.1 118.7L277.7 126.5M266.3 125L286.2 121.8M276.1 118.4L279.7 126.2M266.6 125.7L286.6 122.5M278 118.1L281.7 125.9M267 126.5L286.9 123.3M280 117.8L283.7 125.5M267.3 127.3L287.3 124.1M282 117.4L285.7 125.2M267.7 128.1L287.7 124.9M284 117.1L287.7 124.9" stroke="#ee2226" stroke-width="0.6" shape-rendering="crispEdges" fill="none"/><path d="M194.8 429.6L164.2 462M189.6 383.4L156.9 403.2M190.8 332.3L158.1 337.5M198.4 279.8L167.9 269.7M211.9 229.5L185.5 204.9M230.3 184.8L209.5 147.9M252.1 148.5L237.9 102.4M275.9 122.6L268.5 70.7M397.5 411.9L423.6 438.9M390.1 366.5L414.6 381.2M377.7 317.2L398.9 318M360.9 267.2L377.4 253.6M340.9 219.9L351.6 192.8M319.1 178.4L323.6 140M297 145.4L295.2 98.6M275.9 122.6L268.5 70.7M510.4 321.8L562.3 323.6M502.4 280.9L553.2 272.3M483.8 240.5L530.7 221.3M455.2 203L495.2 173.6M417.9 170.6L448.4 132.1M373.8 145.4L392.8 99.8M325.5 129L331.5 78.8M275.9 122.6L268.5 70.7M461.3 240.2L497.1 223.4M454.4 203.3L489.3 177.5M440 170.4L472.2 136.3M418.2 143.3L446 101.7M389.7 123.6L411.2 75.9M355.4 112.9L368.7 61.1M316.8 112.3L320.3 59M275.9 122.6L268.5 70.7M309.3 217.7L310.6 196.5M304 181.9L304.2 152.2M298.5 151L297.4 113.5M292.9 126.6L290.5 82.2M287.6 110.3L283.8 60.4M282.8 103.5L277.6 50.2M278.8 107.4L272.4 53.2M275.9 122.6L268.5 70.7M150 264L114.4 252.3M146 226.1L108.8 205.1M149.6 191.2L112.4 161.4M161.1 161.2L125.9 123.3M180.3 137.9L149 93.1M206.6 122.9L181.4 73.2M239 117.6L221.9 65.3M275.9 122.6L268.5 70.7M87.5 356.5L31.6 367.3M83.8 314.1L25.9 313.9M91.8 270.5L35 258.7M111.3 228.4L59.2 205.1M141.5 190.4L97.3 156.5M180.7 158.9L147.1 116.3M226.4 135.8L205.5 87.1M275.9 122.6L268.5 70.7" stroke="#921418" stroke-width="1.25" fill="none"/><path d="M194.8 429.6L193.5 422.9M189.6 383.4L189.3 375.7M190.8 332.3L191.5 324.2M198.4 279.8L200.1 271.7M211.9 229.5L214.4 222M230.3 184.8L233.4 178.4M252.1 148.5L255.7 143.7M397.5 411.9L396.7 405.3M390.1 366.5L388.5 359.1M377.7 317.2L375.4 309.4M360.9 267.2L358 259.5M340.9 219.9L337.6 212.9M319.1 178.4L315.7 172.6M297 145.4L293.6 141M502.4 280.9L500.3 274.5M483.8 240.5L480.1 234.4M455.2 203L450 197.5M417.9 170.6L411.5 166.1M373.8 145.4L366.5 142.1M325.5 129L317.8 127.2M316.8 112.3L310.5 113.1M239 117.6L244.4 117.5M111.3 228.4L115.2 222.1M141.5 190.4L146.9 184.9M180.7 158.9L187.4 154.6M226.4 135.8L233.9 133" stroke="#3a8c3a" stroke-width="1.5" fill="none"/><path d="M194.8 429.6L189.8 434.8M189.6 383.4L184.3 386.6M190.8 332.3L185.5 333.2M198.4 279.8L193.4 278.2M211.9 229.5L207.6 225.5M230.3 184.8L226.9 178.8M252.1 148.5L249.8 141M275.9 122.6L274.7 114.1M397.5 411.9L401.8 416.3M390.1 366.5L394.1 368.9M377.7 317.2L381.1 317.3M360.9 267.2L363.6 265M340.9 219.9L342.7 215.5M319.1 178.4L319.8 172.1M297 145.4L296.7 137.7M275.9 122.6L274.7 114.1M510.4 321.8L519 322.1M502.4 280.9L510.8 279.5M483.8 240.5L491.6 237.4M455.2 203L461.8 198.2M417.9 170.6L422.9 164.3M373.8 145.4L376.9 137.9M325.5 129L326.5 120.8M275.9 122.6L274.7 114.1M355.4 112.9L357.6 104.3M316.8 112.3L317.4 103.5M275.9 122.6L274.7 114.1M278.8 107.4L277.7 98.4M275.9 122.6L274.7 114.1M206.6 122.9L202.4 114.7M239 117.6L236.2 108.9M275.9 122.6L274.7 114.1M83.8 314.1L74.3 314M91.8 270.5L82.4 268.6M111.3 228.4L102.7 224.6M141.5 190.4L134.2 184.8M180.7 158.9L175.2 151.9M226.4 135.8L223 127.8M275.9 122.6L274.7 114.1" stroke="#7068e8" stroke-width="1.8" fill="none"/><path d="M411 437 C409 455 404 480 395 497 C390 506 384 512 378 517" stroke="#f01a1e" stroke-width="2.8" fill="none" stroke-linecap="round"/><path d="M379 494 C378 503 377 511 376 518 C382 519 389 521 393 524" stroke="#f01a1e" stroke-width="2.8" fill="none" stroke-linecap="round" stroke-linejoin="round"/><path d="M428.5 505.5 C430 501 438 499.5 441.5 505 C444 510 438 515 436 520 C435 525 437 528 439.5 530" stroke="#f01a1e" stroke-width="2.6" fill="none" stroke-linecap="round" stroke-linejoin="round"/><ellipse cx="447" cy="542.5" rx="2.6" ry="3" fill="#f01a1e"/><rect x="614" y="0" width="10" height="560" fill="url(#shd)"/><rect x="623" y="0" width="1" height="560" fill="#5a6068" fill-opacity="0.8"/></svg></div>
<div id="strip"></div><div id="gl"></div><div id="ed"></div><div id="sep"></div>
<div class="n" style="top:2px">4</div><div class="n" style="top:18px">5</div><div class="n" style="top:34px">6</div><div class="n" style="top:50px">7</div><div class="n" style="top:66px">8</div><div class="n" style="top:82px">9</div><div class="n" style="top:98px">10</div><div class="n" style="top:114px">11</div><div class="n" style="top:130px">12</div><div class="n" style="top:146px">13</div><div class="n" style="top:162px">14</div><div class="n" style="top:178px">15</div><div class="n" style="top:194px">16</div><div class="n" style="top:210px">17</div><div class="n" style="top:226px">18</div><div class="n" style="top:242px">19</div><div class="n" style="top:258px">20</div><div class="n" style="top:274px">21</div><div class="n" style="top:290px">22</div><div class="n" style="top:306px">23</div><div class="n" style="top:322px">24</div><div class="n" style="top:338px">25</div><div class="n" style="top:354px">26</div><div class="n" style="top:370px">27</div><div class="n" style="top:386px">28</div><div class="n" style="top:402px">29</div><div class="n" style="top:418px">30</div><div class="n" style="top:434px">31</div><div class="n" style="top:450px">32</div><div class="n" style="top:466px">33</div><div class="n" style="top:482px">34</div><div class="n" style="top:498px">35</div><div class="n" style="top:514px">36</div><div class="n" style="top:530px">37</div><div class="n" style="top:546px">38</div>
<div class="l" style="top:0px"><span style="color:#1a1acc;font-weight:bold">from</span> ghpythonlib.componentbase <span style="color:#1a1acc;font-weight:bold">import</span> executingcomponent <span style="color:#008080;font-weight:bold">as</span> component</div><div class="l" style="top:16px"><span style="color:#1a1acc;font-weight:bold">import</span> Grasshopper, GhPython</div><div class="l" style="top:32px"><span style="color:#1a1acc;font-weight:bold">import</span> System</div><div class="l" style="top:48px"></div><div class="l" style="top:64px">numa = []</div><div class="l" style="top:80px">numb = []</div><div class="l" style="top:96px">lines = []</div><div class="l" style="top:112px">frames = []</div><div class="l" style="top:128px"></div><div class="l" style="top:144px"><span style="color:#008000">#Change domain</span><span style="color:#2e7a3a;position:relative;top:-1px">------------------------------------------------------------------------------------------------------------------------</span></div><div class="l" style="top:160px">intr1 = rg.<span style="color:#191970">Interval</span>(<span style="color:#191970">0</span>,<span style="color:#191970">1</span>)</div><div class="l" style="top:176px">intr2 = rg.<span style="color:#191970">Interval</span>(<span style="color:#191970">0</span>,<span style="color:#191970">1</span>)</div><div class="l" style="top:192px">rg.Surface.<span style="color:#191970">SetDomain</span>(x,<span style="color:#191970">0</span>,intr1)</div><div class="l" style="top:208px">rg.Surface.<span style="color:#191970">SetDomain</span>(x,<span style="color:#191970">0</span>,intr2)</div><div class="l" style="top:224px">domainU = rs.<span style="color:#191970">SurfaceDomain</span>(x, <span style="color:#191970">0</span>)</div><div class="l" style="top:240px">domainV = rs.<span style="color:#191970">SurfaceDomain</span>(x, <span style="color:#191970">1</span>)</div><div class="l" style="top:256px">u = domainU[<span style="color:#191970">1</span>]</div><div class="l" style="top:272px">v = domainV[<span style="color:#191970">1</span>]</div><div class="l" style="top:288px"><span style="color:#008000">#</span><span style="color:#2e7a3a;position:relative;top:-1px">------------------------------------------------------------------------------------------------------------------------</span></div><div class="l" style="top:304px"><span style="color:#1a1acc;font-weight:bold">if</span> n&gt;<span style="color:#191970">1</span>:</div><div class="l" style="top:320px"><span class="d">····</span><span style="color:#1a1acc;font-weight:bold">for</span> i <span style="color:#1a1acc;font-weight:bold">in</span> <span style="color:#191970">range</span>(n):</div><div class="l" style="top:336px"><span class="d">·······</span><span style="color:#1a1acc;font-weight:bold">for</span> j <span style="color:#1a1acc;font-weight:bold">in</span> <span style="color:#191970">range</span>(n):</div><div class="l" style="top:352px"><span class="d">···········</span><span style="color:#008000">#print(i/(n-1),j/(n-1))</span></div><div class="l" style="top:368px"><span class="d">···········</span>frame = rs.<span style="color:#191970">SurfaceFrame</span>(x, ((u*i)/(n-<span style="color:#191970">1</span>),(v*j)/(n-<span style="color:#191970">1</span>)))</div><div class="l" style="top:384px"><span class="d">···········</span>line = rh.Geometry.<span style="color:#191970">Line</span>(frame[<span style="color:#191970">0</span>],frame[<span style="color:#191970">3</span>],<span style="color:#191970">3</span>)</div><div class="l" style="top:400px"><span class="d">···········</span>frames.<span style="color:#191970">append</span>(frame)</div><div class="l" style="top:416px"><span class="d">···········</span>lines.<span style="color:#191970">append</span>(line)</div><div class="l" style="top:432px"></div><div class="l" style="top:448px">c = lines</div><div class="l" style="top:464px">d = frames</div><div class="l" style="top:480px"></div><div class="l" style="top:496px"></div><div class="l" style="top:512px"></div><div class="l" style="top:528px"></div><div class="l" style="top:544px"></div>
<div id="cur"></div>
<svg width="1216" height="560" style="position:absolute;left:0;top:0;pointer-events:none">
<path d="M675 274 C682 272 690 271 697 270" stroke="#e8191e" stroke-width="2.6" fill="none" stroke-linecap="round"/>
<path d="M672 293 C678 291 680 289 686 289 C689 289 692 289 695 289" stroke="#e8191e" stroke-width="2.6" fill="none" stroke-linecap="round"/>
</svg>
</body></html>
